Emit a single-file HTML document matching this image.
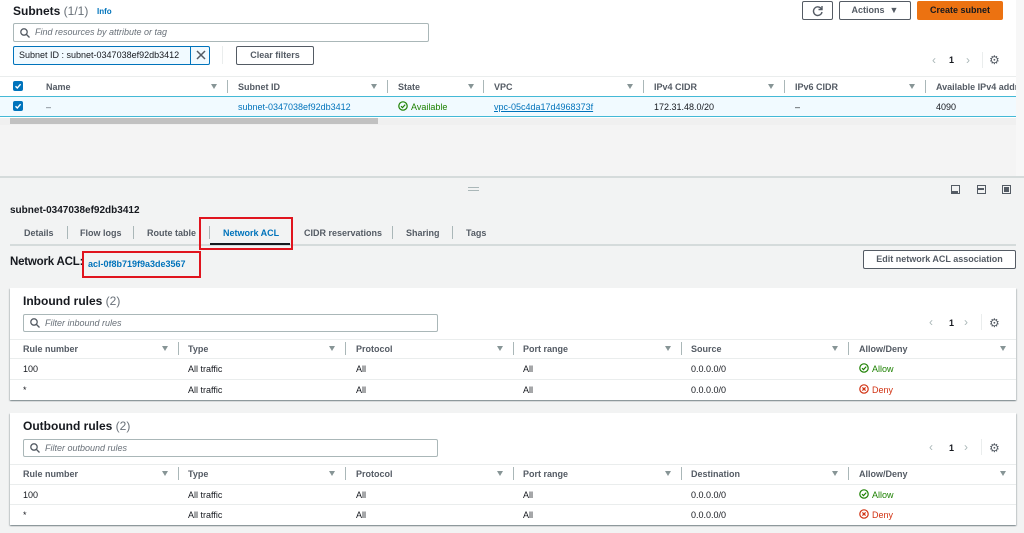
<!DOCTYPE html>
<html><head><meta charset="utf-8"><style>
*{margin:0;padding:0;box-sizing:border-box}
body{width:1024px;height:533px;overflow:hidden;background:#f2f3f3;font-family:"Liberation Sans",sans-serif;font-size:9px;color:#16191f;position:relative}
.a{position:absolute;white-space:nowrap}
.b{font-weight:bold}
.btn{position:absolute;border:1px solid #545b64;background:#fff;font-weight:bold;color:#545b64;text-align:center;border-radius:2px}
.in{position:absolute;border:1px solid #aab7b8;background:#fff;border-radius:2px}
.ph{color:#687078;font-style:italic}
.hd{color:#545b64;font-weight:bold}
.link{color:#0073bb}
.tri{position:absolute;width:0;height:0;border-left:3.5px solid transparent;border-right:3.5px solid transparent;border-top:5px solid #879596}
.sep{position:absolute;width:1px;background:#aab7b8}
.box{position:absolute;background:#fff;box-shadow:0 1px 1px rgba(0,28,36,.3),1px 1px 1px rgba(0,28,36,.15),-1px 1px 1px rgba(0,28,36,.15)}
.red{position:absolute;border:2px solid #e0141e}
.ok{position:absolute;color:#1d8102}
.no{position:absolute;color:#d13212}
</style></head><body>
<svg width="0" height="0" style="position:absolute"><defs>
<symbol id="ok" viewBox="0 0 10 10"><circle cx="5" cy="5" r="4.2" fill="none" stroke="#1d8102" stroke-width="1.2"/><path d="M3 5.2 4.5 6.6 7.2 3.6" fill="none" stroke="#1d8102" stroke-width="1.2"/></symbol>
<symbol id="no" viewBox="0 0 10 10"><circle cx="5" cy="5" r="4.2" fill="none" stroke="#d13212" stroke-width="1.2"/><path d="M3.4 3.4 6.6 6.6M6.6 3.4 3.4 6.6" stroke="#d13212" stroke-width="1.2"/></symbol>
<symbol id="cb" viewBox="0 0 10 10"><rect width="10" height="10" rx="2" fill="#0073bb"/><path d="M2.5 5.2 4.3 7 7.6 3.2" fill="none" stroke="#fff" stroke-width="1.4"/></symbol>
</defs></svg>
<!-- top panel -->
<div class="a" style="left:0;top:0;width:1024px;height:176px;background:#fff"></div>
<div class="a" style="left:0;top:125px;width:1016px;height:51px;background:#f4f4f4"></div>
<div class="a b" style="left:13px;top:4px;font-size:12px">Subnets <span style="font-weight:normal;color:#687078">(1/1)</span></div>
<div class="a b link" style="left:97px;top:7px;font-size:8px">Info</div>
<div class="in" style="left:13px;top:23px;width:416px;height:19px"><svg style="position:absolute;left:6px;top:4px" width="10" height="10"><circle cx="4" cy="4" r="3.2" fill="none" stroke="#545b64" stroke-width="1.3"/><path d="M6.5 6.5 9.5 9.5" stroke="#545b64" stroke-width="1.3"/></svg><span class="a ph" style="left:21px;top:3px">Find resources by attribute or tag</span></div>
<div class="a" style="left:13px;top:46px;width:197px;height:19px;border:1px solid #0073bb;background:#f1faff;border-radius:2px"><span class="a" style="left:5px;top:3px;color:#16191f">Subnet ID : subnet-0347038ef92db3412</span><div class="a" style="left:176px;top:0;width:1px;height:17px;background:#0073bb"></div><svg style="position:absolute;left:182px;top:3px" width="10" height="10"><path d="M1 1 9 9M9 1 1 9" stroke="#545b64" stroke-width="1.5"/></svg></div>
<div class="a" style="left:222px;top:46px;width:1px;height:18px;background:#eaeded"></div>
<div class="btn" style="left:236px;top:46px;width:78px;height:19px;line-height:17px">Clear filters</div>
<div class="btn" style="left:802px;top:1px;width:31px;height:19px"><svg style="position:absolute;left:9px;top:3px" width="12" height="12"><path d="M9.5 4A4.3 4.3 0 1 0 10 7" fill="none" stroke="#545b64" stroke-width="1.4"/><path d="M10 1V4.5H6.5" fill="none" stroke="#545b64" stroke-width="1.4"/></svg></div>
<div class="btn" style="left:839px;top:1px;width:72px;height:19px;line-height:17px">Actions &nbsp;▼</div>
<div class="a b" style="left:917px;top:1px;width:86px;height:19px;background:#ec7211;color:#16191f;text-align:center;line-height:19px;border-radius:2px">Create subnet</div>
<div class="a" style="left:932px;top:53px;color:#aab7b8;font-size:12px">‹</div>
<div class="a b" style="left:949px;top:55px">1</div>
<div class="a" style="left:966px;top:53px;color:#aab7b8;font-size:12px">›</div>
<div class="a" style="left:982px;top:52px;width:1px;height:16px;background:#eaeded"></div>
<div class="a" style="left:989px;top:53px;font-size:12px;color:#545b64">⚙</div>
<!-- table -->
<div class="a" style="left:0;top:76px;width:1016px;height:1px;background:#eaeded"></div>
<svg class="a" style="left:13px;top:81px" width="10" height="10"><use href="#cb"/></svg>
<div class="a hd" style="left:46px;top:82px">Name</div><div class="tri" style="left:211px;top:84px"></div><div class="sep" style="left:227px;top:80px;height:13px"></div>
<div class="a hd" style="left:238px;top:82px">Subnet ID</div><div class="tri" style="left:371px;top:84px"></div><div class="sep" style="left:387px;top:80px;height:13px"></div>
<div class="a hd" style="left:398px;top:82px">State</div><div class="tri" style="left:468px;top:84px"></div><div class="sep" style="left:483px;top:80px;height:13px"></div>
<div class="a hd" style="left:494px;top:82px">VPC</div><div class="tri" style="left:627px;top:84px"></div><div class="sep" style="left:643px;top:80px;height:13px"></div>
<div class="a hd" style="left:654px;top:82px">IPv4 CIDR</div><div class="tri" style="left:768px;top:84px"></div><div class="sep" style="left:784px;top:80px;height:13px"></div>
<div class="a hd" style="left:795px;top:82px">IPv6 CIDR</div><div class="tri" style="left:909px;top:84px"></div><div class="sep" style="left:925px;top:80px;height:13px"></div>
<div class="a hd" style="left:936px;top:82px">Available IPv4 addr</div>
<div class="a" style="left:0;top:96px;width:1016px;height:21px;background:#f1faff;border-top:1px solid #44b9d6;border-bottom:1px solid #44b9d6"></div>
<svg class="a" style="left:13px;top:101px" width="10" height="10"><use href="#cb"/></svg>
<div class="a" style="left:46px;top:102px;color:#545b64">–</div>
<div class="a link" style="left:238px;top:102px">subnet-0347038ef92db3412</div>
<svg class="a" style="left:398px;top:101px" width="10" height="10"><use href="#ok"/></svg>
<div class="a" style="left:411px;top:102px;color:#1d8102">Available</div>
<div class="a link" style="left:494px;top:102px;text-decoration:underline">vpc-05c4da17d4968373f</div>
<div class="a" style="left:654px;top:102px">172.31.48.0/20</div>
<div class="a" style="left:795px;top:102px">–</div>
<div class="a" style="left:936px;top:102px">4090</div>
<div class="a" style="left:0;top:118px;width:1016px;height:7px;background:#f0f0f0"></div>
<div class="a" style="left:10px;top:118px;width:368px;height:6px;background:#c1c1c1"></div>
<div class="a" style="left:1016px;top:0;width:8px;height:176px;background:#f7f7f7"></div>
<!-- split -->
<div class="a" style="left:0;top:176px;width:1024px;height:2px;background:#d5dbdb"></div>
<div class="a" style="left:468px;top:187px;width:11px;height:1px;background:#aab7b8"></div>
<div class="a" style="left:468px;top:190px;width:11px;height:1px;background:#aab7b8"></div>
<div class="a" style="left:951px;top:185px;width:9px;height:9px;border:1.5px solid #545b64"><div class="a" style="left:0;bottom:0;width:6px;height:2px;background:#545b64"></div></div>
<div class="a" style="left:977px;top:185px;width:9px;height:9px;border:1.5px solid #545b64"><div class="a" style="left:0;top:2px;width:6px;height:2px;background:#545b64"></div></div>
<div class="a" style="left:1002px;top:185px;width:9px;height:9px;border:1.5px solid #545b64;background:#545b64;box-shadow:inset 0 0 0 1px #f2f3f3"></div>
<div class="a b" style="left:10px;top:205px;font-size:10px">subnet-0347038ef92db3412</div>
<div class="a" style="left:10px;top:244px;width:1006px;height:2px;background:#d5dbdb"></div>
<div class="a hd" style="left:24px;top:228px">Details</div><div class="sep" style="left:67px;top:226px;height:13px"></div>
<div class="a hd" style="left:80px;top:228px">Flow logs</div><div class="sep" style="left:133px;top:226px;height:13px"></div>
<div class="a hd" style="left:147px;top:228px">Route table</div><div class="sep" style="left:209px;top:226px;height:13px"></div>
<div class="a b link" style="left:223px;top:228px">Network ACL</div><div class="sep" style="left:291px;top:226px;height:13px"></div>
<div class="a" style="left:210px;top:243px;width:80px;height:2px;background:#16191f"></div>
<div class="a hd" style="left:304px;top:228px">CIDR reservations</div><div class="sep" style="left:392px;top:226px;height:13px"></div>
<div class="a hd" style="left:406px;top:228px">Sharing</div><div class="sep" style="left:452px;top:226px;height:13px"></div>
<div class="a hd" style="left:466px;top:228px">Tags</div>
<div class="red" style="left:199px;top:217px;width:94px;height:33px"></div>
<div class="a b" style="left:10px;top:256px;font-size:11.5px;letter-spacing:-0.2px">Network ACL:</div>
<div class="a b link" style="left:88px;top:259px">acl-0f8b719f9a3de3567</div>
<div class="red" style="left:82px;top:251px;width:119px;height:27px"></div>
<div class="btn" style="left:863px;top:250px;width:153px;height:19px;line-height:17px">Edit network ACL association</div>

<div class="box" style="left:10px;top:288px;width:1006px;height:112px"></div>
<div class="box" style="left:10px;top:413px;width:1006px;height:112px"></div>
<div class="a b" style="left:23px;top:294px;font-size:12px">Inbound rules <span style="font-weight:normal;color:#687078">(2)</span></div>
<div class="in" style="left:23px;top:314px;width:415px;height:18px"><svg style="position:absolute;left:6px;top:3px" width="10" height="10"><circle cx="4" cy="4" r="3.2" fill="none" stroke="#545b64" stroke-width="1.3"/><path d="M6.5 6.5 9.5 9.5" stroke="#545b64" stroke-width="1.3"/></svg><span class="a ph" style="left:21px;top:3px">Filter inbound rules</span></div>
<div class="a b" style="left:23px;top:419px;font-size:12px">Outbound rules <span style="font-weight:normal;color:#687078">(2)</span></div>
<div class="in" style="left:23px;top:439px;width:415px;height:18px"><svg style="position:absolute;left:6px;top:3px" width="10" height="10"><circle cx="4" cy="4" r="3.2" fill="none" stroke="#545b64" stroke-width="1.3"/><path d="M6.5 6.5 9.5 9.5" stroke="#545b64" stroke-width="1.3"/></svg><span class="a ph" style="left:21px;top:3px">Filter outbound rules</span></div>

<div class="a" style="left:929px;top:315px;color:#aab7b8;font-size:12px">‹</div><div class="a b" style="left:949px;top:318px">1</div><div class="a" style="left:964px;top:315px;color:#aab7b8;font-size:12px">›</div><div class="a" style="left:981px;top:314px;width:1px;height:16px;background:#eaeded"></div><div class="a" style="left:989px;top:316px;font-size:12px;color:#545b64">⚙</div>
<div class="a" style="left:929px;top:440px;color:#aab7b8;font-size:12px">‹</div><div class="a b" style="left:949px;top:443px">1</div><div class="a" style="left:964px;top:440px;color:#aab7b8;font-size:12px">›</div><div class="a" style="left:981px;top:439px;width:1px;height:16px;background:#eaeded"></div><div class="a" style="left:989px;top:441px;font-size:12px;color:#545b64">⚙</div>

<div class="a" style="left:10px;top:339px;width:1006px;height:1px;background:#eaeded"></div>
<div class="a" style="left:10px;top:358px;width:1006px;height:1px;background:#eaeded"></div>
<div class="a" style="left:10px;top:379px;width:1006px;height:1px;background:#eaeded"></div>
<div class="a hd" style="left:23px;top:344px">Rule number</div><div class="tri" style="left:162px;top:346px"></div><div class="sep" style="left:178px;top:342px;height:13px"></div>
<div class="a hd" style="left:188px;top:344px">Type</div><div class="tri" style="left:329px;top:346px"></div><div class="sep" style="left:345px;top:342px;height:13px"></div>
<div class="a hd" style="left:356px;top:344px">Protocol</div><div class="tri" style="left:497px;top:346px"></div><div class="sep" style="left:513px;top:342px;height:13px"></div>
<div class="a hd" style="left:523px;top:344px">Port range</div><div class="tri" style="left:665px;top:346px"></div><div class="sep" style="left:681px;top:342px;height:13px"></div>
<div class="a hd" style="left:691px;top:344px">Source</div><div class="tri" style="left:832px;top:346px"></div><div class="sep" style="left:848px;top:342px;height:13px"></div>
<div class="a hd" style="left:859px;top:344px">Allow/Deny</div><div class="tri" style="left:1000px;top:346px"></div>
<div class="a" style="left:23px;top:364px">100</div><div class="a" style="left:188px;top:364px">All traffic</div><div class="a" style="left:356px;top:364px">All</div><div class="a" style="left:523px;top:364px">All</div><div class="a" style="left:691px;top:364px">0.0.0.0/0</div>
<svg class="a" style="left:859px;top:363px" width="10" height="10"><use href="#ok"/></svg><div class="ok" style="left:872px;top:364px">Allow</div>
<div class="a" style="left:23px;top:385px">*</div><div class="a" style="left:188px;top:385px">All traffic</div><div class="a" style="left:356px;top:385px">All</div><div class="a" style="left:523px;top:385px">All</div><div class="a" style="left:691px;top:385px">0.0.0.0/0</div>
<svg class="a" style="left:859px;top:384px" width="10" height="10"><use href="#no"/></svg><div class="no" style="left:872px;top:385px">Deny</div>

<div class="a" style="left:10px;top:464px;width:1006px;height:1px;background:#eaeded"></div>
<div class="a" style="left:10px;top:484px;width:1006px;height:1px;background:#eaeded"></div>
<div class="a" style="left:10px;top:504px;width:1006px;height:1px;background:#eaeded"></div>
<div class="a hd" style="left:23px;top:469px">Rule number</div><div class="tri" style="left:162px;top:471px"></div><div class="sep" style="left:178px;top:467px;height:13px"></div>
<div class="a hd" style="left:188px;top:469px">Type</div><div class="tri" style="left:329px;top:471px"></div><div class="sep" style="left:345px;top:467px;height:13px"></div>
<div class="a hd" style="left:356px;top:469px">Protocol</div><div class="tri" style="left:497px;top:471px"></div><div class="sep" style="left:513px;top:467px;height:13px"></div>
<div class="a hd" style="left:523px;top:469px">Port range</div><div class="tri" style="left:665px;top:471px"></div><div class="sep" style="left:681px;top:467px;height:13px"></div>
<div class="a hd" style="left:691px;top:469px">Destination</div><div class="tri" style="left:832px;top:471px"></div><div class="sep" style="left:848px;top:467px;height:13px"></div>
<div class="a hd" style="left:859px;top:469px">Allow/Deny</div><div class="tri" style="left:1000px;top:471px"></div>
<div class="a" style="left:23px;top:490px">100</div><div class="a" style="left:188px;top:490px">All traffic</div><div class="a" style="left:356px;top:490px">All</div><div class="a" style="left:523px;top:490px">All</div><div class="a" style="left:691px;top:490px">0.0.0.0/0</div>
<svg class="a" style="left:859px;top:489px" width="10" height="10"><use href="#ok"/></svg><div class="ok" style="left:872px;top:490px">Allow</div>
<div class="a" style="left:23px;top:510px">*</div><div class="a" style="left:188px;top:510px">All traffic</div><div class="a" style="left:356px;top:510px">All</div><div class="a" style="left:523px;top:510px">All</div><div class="a" style="left:691px;top:510px">0.0.0.0/0</div>
<svg class="a" style="left:859px;top:509px" width="10" height="10"><use href="#no"/></svg><div class="no" style="left:872px;top:510px">Deny</div>
</body></html>
